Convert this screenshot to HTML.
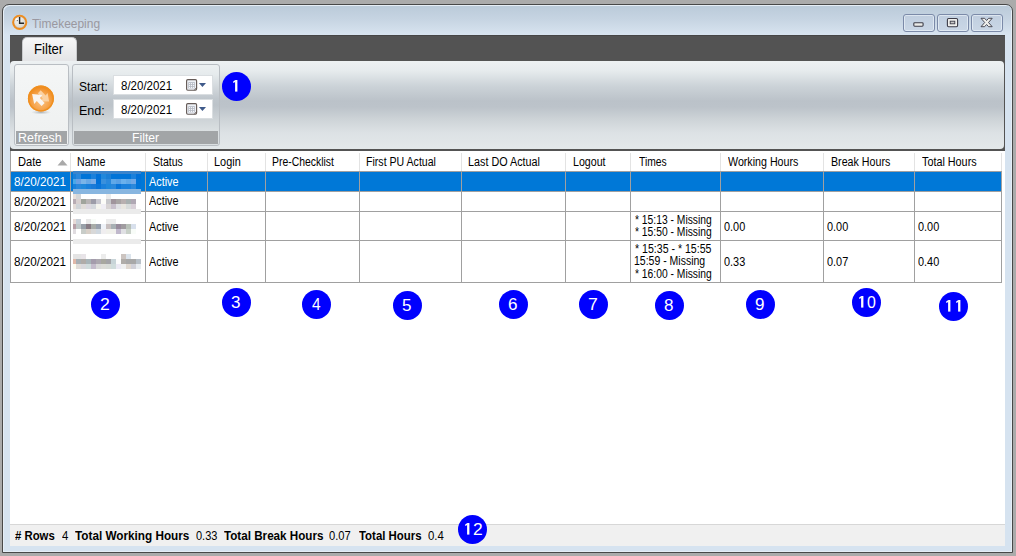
<!DOCTYPE html>
<html><head><meta charset="utf-8">
<style>
*{box-sizing:border-box;margin:0;padding:0}
html,body{width:1016px;height:556px;overflow:hidden;background:#ababab;font-family:"Liberation Sans",sans-serif;position:relative}
.a{position:absolute;white-space:nowrap}
#win{left:2px;top:4px;width:1011px;height:549px;border:1px solid #484848;border-radius:7px 7px 0 0;background:linear-gradient(#bacad9 0px,#c6d4e2 14px,#d8e4f0 30px,#d6e3f0 60px,#d6e3f0 100%);box-shadow:inset 1px 1px 0 #e6eef6,inset -1px -1px 0 #e6eef6;}
#title{left:32px;top:15px;font-size:13px;color:#9a98a0;}
.tb{top:14px;width:32px;height:18px;border:1px solid #7b8aa8;border-radius:3px;background:linear-gradient(#c0cedf,#cad7e6);box-shadow:inset 0 0 0 1px rgba(240,246,252,0.6);}
#band{left:10px;top:35px;width:995px;height:116px;background:#535353;border-top:1px solid #464646;}
#tab{left:22px;top:37px;width:55px;height:25px;border-radius:5px 5px 0 0;background:linear-gradient(#f7f7f7,#e3e4e6);border:1px solid #c9cacc;border-bottom:none;}
#ribbon{left:10px;top:61px;width:994px;height:88px;border-radius:3px;background:linear-gradient(#edf1f2 0px,#e6ebed 10px,#ccd3d8 25px,#bbc2c9 40px,#bcc3ca 46px,#cdd3d7 58px,#dde2e5 72px,#e3e8ea 88px);border-radius:4px;}
.grp{top:64px;height:82px;border:1px solid #b9bec3;border-radius:3px;background:linear-gradient(#ecf0f1 0px,#e6ebed 9px,#d2d8dc 22px,#bfc6cc 34px,#bcc3c9 40px,#cbd1d5 52px,#dbe0e2 66px);}
.glab{position:absolute;left:1px;right:1px;bottom:1px;height:13px;background:#a2a5a7;}
.inp{left:113px;width:100px;height:20px;background:#fff;border:1px solid #dadee1;}
#grid{left:10px;top:151px;width:995px;height:373px;background:#fff;}
.ln{position:absolute;background:#a0a0a0}
.hs{position:absolute;background:#e3e3e3}
.t{position:absolute;white-space:nowrap;color:#111;font-size:11px;line-height:13px}
#status{left:10px;top:524px;width:995px;height:22px;background:#f0f0f0;border-top:1px solid #d7d7d7;}
.circ{position:absolute;width:29.5px;height:29.5px;border-radius:50%;background:#0000fe;}
.ct{position:absolute;color:#fff;font-size:16px;white-space:nowrap}
</style></head><body>
<div id="win" class="a"></div>
<svg class="a" style="left:11px;top:14px" width="18" height="17" viewBox="0 0 18 17">
  <defs><radialGradient id="cg" cx="0.4" cy="0.35" r="0.7"><stop offset="0" stop-color="#f6f6f2"/><stop offset="1" stop-color="#cfd1cb"/></radialGradient></defs>
  <circle cx="8.7" cy="8.3" r="6.7" fill="url(#cg)" stroke="#ef8e1f" stroke-width="1.8"/>
  <circle cx="8.7" cy="8.3" r="5.75" fill="none" stroke="#c8701e" stroke-width="0.5" stroke-opacity="0.7"/>
  <path d="M8.6 3.0 V9.2 H13.0" fill="none" stroke="#262626" stroke-width="1.4"/>
  <rect x="4.6" y="4.5" width="1.8" height="1.8" fill="#fff"/>
  <rect x="5.8" y="6.1" width="1" height="1" fill="#555"/>
</svg>
<div id="title" class="a"></div>
<div class="t" style="left:32.17px;top:23.80px;font-size:13px;color:#9a98a0;font-weight:normal;line-height:0;transform:scaleX(0.9210);transform-origin:0 0;">Timekeeping</div>
<div class="a tb" style="left:903px"></div>
<div class="a tb" style="left:937px"></div>
<div class="a tb" style="left:971px"></div>
<svg class="a" style="left:900px;top:12px" width="110" height="22" viewBox="0 0 110 22">
 <rect x="13.8" y="10.7" width="9.3" height="3.5" rx="0.9" fill="#ebebe8" stroke="#3c3c48" stroke-width="1.1"/>
 <rect x="47.4" y="6.5" width="10.2" height="8.2" rx="1.2" fill="#efefec" stroke="#3c3c48" stroke-width="1.1"/>
 <rect x="50.2" y="9.2" width="4.6" height="2.6" fill="#c8c8c8" stroke="#3c3c48" stroke-width="0.9"/>
 <path d="M81 6.3 L84.6 6.3 L86.6 8.5 L88.6 6.3 L92.2 6.3 L88.5 10.5 L92.2 14.7 L88.6 14.7 L86.6 12.5 L84.6 14.7 L81 14.7 L84.7 10.5 Z" fill="#efefec" stroke="#3c3c48" stroke-width="0.9" stroke-linejoin="round"/>
</svg>
<div id="band" class="a"></div>
<div id="tab" class="a"></div>
<div class="t" style="left:34.06px;top:48.85px;font-size:14px;color:#000;font-weight:normal;line-height:0;transform:scaleX(0.9400);transform-origin:0 0;">Filter</div>
<div id="ribbon" class="a"></div>
<div class="a grp" style="left:14px;width:55px;background:linear-gradient(#f4f6f6,#eef0f0)"><div class="glab"></div></div>
<svg class="a" style="left:24px;top:81px" width="34" height="34" viewBox="0 0 34 34">
 <defs><radialGradient id="og" cx="0.5" cy="0.6" r="0.55"><stop offset="0" stop-color="#fbc487"/><stop offset="0.55" stop-color="#f6a650"/><stop offset="1" stop-color="#ef8a1e"/></radialGradient>
 <radialGradient id="sh" cx="0.5" cy="0.5" r="0.5"><stop offset="0" stop-color="#9aa0a4" stop-opacity="0.8"/><stop offset="1" stop-color="#b8bcc0" stop-opacity="0"/></radialGradient></defs>
 <ellipse cx="17" cy="31.3" rx="10" ry="2.2" fill="url(#sh)"/>
 <circle cx="16.9" cy="17.6" r="13" fill="url(#og)"/>
 <circle cx="16.9" cy="17.6" r="12.3" fill="none" stroke="#f0901f" stroke-width="1.4"/>
 <path d="M25.1 20.4 L16.6 20.3 L18.8 17.8 L13.9 12.3 L16.7 9.3 L21.6 14.6 L23.6 11.9 Z" fill="#fbd2a2"/>
 <path d="M8.1 13.0 L18.4 14.1 L15.9 16.9 L20.6 21.9 L17.6 25.0 L12.8 20.0 L10.2 22.9 Z" fill="#f8f5f2"/>
</svg>
<div class="a grp" style="left:72px;width:148px;"><div class="glab"></div></div>
<div class="t" style="left:18.40px;top:138.27px;font-size:12.5px;color:#fff;font-weight:normal;line-height:0;transform:scaleX(0.9976);transform-origin:0 0;">Refresh</div>
<div class="t" style="left:131.92px;top:138.27px;font-size:12.5px;color:#fff;font-weight:normal;line-height:0;transform:scaleX(0.9774);transform-origin:0 0;">Filter</div>
<div class="t" style="left:78.90px;top:86.54px;font-size:12px;color:#000;font-weight:normal;line-height:0;transform:scaleX(1.0037);transform-origin:0 0;">Start:</div>
<div class="t" style="left:78.65px;top:110.74px;font-size:12px;color:#000;font-weight:normal;line-height:0;transform:scaleX(1.0462);transform-origin:0 0;">End:</div>
<div class="a inp" style="top:75px"></div>
<svg class="a" style="left:184px;top:77px" width="26" height="16" viewBox="0 0 26 16">
 <rect x="2.6" y="2.6" width="10" height="10.6" rx="1.2" fill="#eef1f6" stroke="#655b57" stroke-width="1.15"/><path d="M12.6 10.6 L10.4 13.2" stroke="#655b57" stroke-width="1"/>
 <rect x="4.3" y="5.2" width="6.6" height="6.2" fill="#b4b9c2"/>
 <g fill="#f4f6fa"><rect x="5" y="6" width="1.2" height="1.2"/><rect x="7" y="6" width="1.2" height="1.2"/><rect x="9" y="6" width="1.2" height="1.2"/>
 <rect x="5" y="8" width="1.2" height="1.2"/><rect x="7" y="8" width="1.2" height="1.2"/><rect x="9" y="8" width="1.2" height="1.2"/>
 <rect x="5" y="10" width="1.2" height="1.2"/><rect x="7" y="10" width="1.2" height="1.2"/><rect x="9" y="10" width="1.2" height="1.2"/></g>
 <path d="M14.9 6 L22 6 L18.45 10 Z" fill="#3f5a8a"/>
</svg>
<div class="a inp" style="top:99px"></div>
<svg class="a" style="left:184px;top:101px" width="26" height="16" viewBox="0 0 26 16">
 <rect x="2.6" y="2.6" width="10" height="10.6" rx="1.2" fill="#eef1f6" stroke="#655b57" stroke-width="1.15"/><path d="M12.6 10.6 L10.4 13.2" stroke="#655b57" stroke-width="1"/>
 <rect x="4.3" y="5.2" width="6.6" height="6.2" fill="#b4b9c2"/>
 <g fill="#f4f6fa"><rect x="5" y="6" width="1.2" height="1.2"/><rect x="7" y="6" width="1.2" height="1.2"/><rect x="9" y="6" width="1.2" height="1.2"/>
 <rect x="5" y="8" width="1.2" height="1.2"/><rect x="7" y="8" width="1.2" height="1.2"/><rect x="9" y="8" width="1.2" height="1.2"/>
 <rect x="5" y="10" width="1.2" height="1.2"/><rect x="7" y="10" width="1.2" height="1.2"/><rect x="9" y="10" width="1.2" height="1.2"/></g>
 <path d="M14.9 6 L22 6 L18.45 10 Z" fill="#3f5a8a"/>
</svg>
<div class="t" style="left:120.86px;top:85.80px;font-size:13px;color:#000;font-weight:normal;line-height:0;transform:scaleX(0.8846);transform-origin:0 0;">8/20/2021</div>
<div class="t" style="left:120.86px;top:109.70px;font-size:13px;color:#000;font-weight:normal;line-height:0;transform:scaleX(0.8846);transform-origin:0 0;">8/20/2021</div>
<div id="grid" class="a"></div>
<div class="a" style="left:11px;top:172px;width:990px;height:19px;background:#0078d7"></div>
<div class="ln" style="left:10px;top:151px;width:1px;height:132px"></div>
<div class="hs" style="left:70px;top:153px;width:1px;height:18px"></div>
<div class="ln" style="left:70px;top:171px;width:1px;height:112px"></div>
<div class="hs" style="left:145px;top:153px;width:1px;height:18px"></div>
<div class="ln" style="left:145px;top:171px;width:1px;height:112px"></div>
<div class="hs" style="left:207px;top:153px;width:1px;height:18px"></div>
<div class="ln" style="left:207px;top:171px;width:1px;height:112px"></div>
<div class="hs" style="left:265px;top:153px;width:1px;height:18px"></div>
<div class="ln" style="left:265px;top:171px;width:1px;height:112px"></div>
<div class="hs" style="left:359px;top:153px;width:1px;height:18px"></div>
<div class="ln" style="left:359px;top:171px;width:1px;height:112px"></div>
<div class="hs" style="left:461px;top:153px;width:1px;height:18px"></div>
<div class="ln" style="left:461px;top:171px;width:1px;height:112px"></div>
<div class="hs" style="left:565px;top:153px;width:1px;height:18px"></div>
<div class="ln" style="left:565px;top:171px;width:1px;height:112px"></div>
<div class="hs" style="left:630px;top:153px;width:1px;height:18px"></div>
<div class="ln" style="left:630px;top:171px;width:1px;height:112px"></div>
<div class="hs" style="left:720px;top:153px;width:1px;height:18px"></div>
<div class="ln" style="left:720px;top:171px;width:1px;height:112px"></div>
<div class="hs" style="left:823px;top:153px;width:1px;height:18px"></div>
<div class="ln" style="left:823px;top:171px;width:1px;height:112px"></div>
<div class="hs" style="left:914px;top:153px;width:1px;height:18px"></div>
<div class="ln" style="left:914px;top:171px;width:1px;height:112px"></div>
<div class="hs" style="left:1001px;top:153px;width:1px;height:18px"></div>
<div class="ln" style="left:1001px;top:171px;width:1px;height:112px"></div>
<div class="ln" style="left:10px;top:171px;width:992px;height:1px"></div>
<div class="ln" style="left:10px;top:191px;width:992px;height:1px"></div>
<div class="ln" style="left:10px;top:211px;width:992px;height:1px"></div>
<div class="ln" style="left:10px;top:240px;width:992px;height:1px"></div>
<div class="ln" style="left:10px;top:282px;width:992px;height:1px"></div>
<svg class="a" style="left:73px;top:171px" width="68" height="100" shape-rendering="crispEdges"><rect x="0" y="0" width="68" height="3" fill="#3a84cc"/><rect x="0" y="3" width="3" height="5" fill="#1a7fd8"/><rect x="3" y="3" width="5" height="5" fill="#2a88dc"/><rect x="8" y="3" width="5" height="5" fill="#0074d8"/><rect x="13" y="3" width="5" height="5" fill="#0074d8"/><rect x="18" y="3" width="5" height="5" fill="#1a80dc"/><rect x="23" y="3" width="5" height="5" fill="#0070d8"/><rect x="28" y="3" width="5" height="5" fill="#2088dc"/><rect x="33" y="3" width="5" height="5" fill="#1a7fd6"/><rect x="38" y="3" width="5" height="5" fill="#0074d8"/><rect x="43" y="3" width="5" height="5" fill="#0074d8"/><rect x="48" y="3" width="5" height="5" fill="#0074d8"/><rect x="53" y="3" width="5" height="5" fill="#0074d8"/><rect x="58" y="3" width="5" height="5" fill="#1a80dc"/><rect x="63" y="3" width="5" height="5" fill="#0070d8"/><rect x="0" y="8" width="3" height="5" fill="#4aa8e8"/><rect x="3" y="8" width="5" height="5" fill="#6aa0e4"/><rect x="8" y="8" width="5" height="5" fill="#7ab4e8"/><rect x="13" y="8" width="5" height="5" fill="#68a8e6"/><rect x="18" y="8" width="5" height="5" fill="#7aace6"/><rect x="23" y="8" width="5" height="5" fill="#0070d8"/><rect x="28" y="8" width="5" height="5" fill="#3a90dc"/><rect x="33" y="8" width="5" height="5" fill="#2a88dc"/><rect x="38" y="8" width="5" height="5" fill="#60a8e8"/><rect x="43" y="8" width="5" height="5" fill="#5aa0e4"/><rect x="48" y="8" width="5" height="5" fill="#6ab0ec"/><rect x="53" y="8" width="5" height="5" fill="#60a8e8"/><rect x="58" y="8" width="5" height="5" fill="#70a8e6"/><rect x="63" y="8" width="5" height="5" fill="#0074d8"/><rect x="0" y="13" width="3" height="5" fill="#1a80dc"/><rect x="3" y="13" width="5" height="5" fill="#2a88dc"/><rect x="8" y="13" width="5" height="5" fill="#2088dc"/><rect x="13" y="13" width="5" height="5" fill="#1a80dc"/><rect x="18" y="13" width="5" height="5" fill="#1a7ad8"/><rect x="23" y="13" width="5" height="5" fill="#0a74d8"/><rect x="28" y="13" width="5" height="5" fill="#1a80dc"/><rect x="33" y="13" width="5" height="5" fill="#2088dc"/><rect x="38" y="13" width="5" height="5" fill="#2a88dc"/><rect x="43" y="13" width="5" height="5" fill="#0a74d8"/><rect x="48" y="13" width="5" height="5" fill="#1a80dc"/><rect x="53" y="13" width="5" height="5" fill="#1a80dc"/><rect x="58" y="13" width="5" height="5" fill="#2a88dc"/><rect x="63" y="13" width="5" height="5" fill="#0074d8"/><rect x="0" y="18" width="68" height="5" fill="#88b6e0"/><rect x="0" y="23" width="3" height="5" fill="#e8e0dc"/><rect x="3" y="23" width="5" height="5" fill="#d4d6d8"/><rect x="33" y="23" width="5" height="5" fill="#ececec"/><rect x="0" y="28" width="3" height="5" fill="#b8acb4"/><rect x="3" y="28" width="5" height="5" fill="#d8d0d0"/><rect x="8" y="28" width="5" height="5" fill="#a0a49c"/><rect x="13" y="28" width="5" height="5" fill="#b8b4b4"/><rect x="18" y="28" width="5" height="5" fill="#9c9ca8"/><rect x="23" y="28" width="5" height="5" fill="#c8c8d0"/><rect x="28" y="28" width="5" height="5" fill="#fcfcf8"/><rect x="33" y="28" width="5" height="5" fill="#c8c8cc"/><rect x="38" y="28" width="5" height="5" fill="#a0949c"/><rect x="43" y="28" width="5" height="5" fill="#a8a4a4"/><rect x="48" y="28" width="5" height="5" fill="#b8b0b0"/><rect x="53" y="28" width="5" height="5" fill="#a8b0b0"/><rect x="58" y="28" width="5" height="5" fill="#b0a8b4"/><rect x="0" y="33" width="3" height="5" fill="#e4dcd8"/><rect x="3" y="33" width="5" height="5" fill="#d0d4d8"/><rect x="8" y="33" width="5" height="5" fill="#e0dcd8"/><rect x="13" y="33" width="5" height="5" fill="#dcd8e0"/><rect x="18" y="33" width="5" height="5" fill="#d4d8dc"/><rect x="23" y="33" width="5" height="5" fill="#f4f4ee"/><rect x="28" y="33" width="5" height="5" fill="#f0eef4"/><rect x="33" y="33" width="5" height="5" fill="#d8d4d4"/><rect x="38" y="33" width="5" height="5" fill="#c8c0cc"/><rect x="43" y="33" width="5" height="5" fill="#e0e0e4"/><rect x="48" y="33" width="5" height="5" fill="#e8e6e0"/><rect x="53" y="33" width="5" height="5" fill="#d8dcdc"/><rect x="58" y="33" width="5" height="5" fill="#d8d0d8"/><rect x="0" y="38" width="68" height="5" fill="#ebebeb"/><rect x="0" y="48" width="3" height="5" fill="#e8dcd8"/><rect x="3" y="48" width="5" height="5" fill="#c8d0d8"/><rect x="13" y="48" width="5" height="5" fill="#e8e8e8"/><rect x="18" y="48" width="5" height="5" fill="#f8fcf8"/><rect x="33" y="48" width="5" height="5" fill="#ececec"/><rect x="38" y="48" width="5" height="5" fill="#ececec"/><rect x="0" y="53" width="3" height="5" fill="#b8a0a8"/><rect x="3" y="53" width="5" height="5" fill="#c0c8c8"/><rect x="8" y="53" width="5" height="5" fill="#98a0a8"/><rect x="13" y="53" width="5" height="5" fill="#887c84"/><rect x="18" y="53" width="5" height="5" fill="#a8aca8"/><rect x="23" y="53" width="5" height="5" fill="#98a0ac"/><rect x="28" y="53" width="5" height="5" fill="#eef2f8"/><rect x="33" y="53" width="5" height="5" fill="#c8c0c0"/><rect x="38" y="53" width="5" height="5" fill="#a8b0b4"/><rect x="43" y="53" width="5" height="5" fill="#988c9c"/><rect x="48" y="53" width="5" height="5" fill="#a09ca0"/><rect x="53" y="53" width="5" height="5" fill="#b8c0b8"/><rect x="58" y="53" width="5" height="5" fill="#d8e0ec"/><rect x="0" y="58" width="3" height="5" fill="#e0dce0"/><rect x="8" y="58" width="5" height="5" fill="#c8ccc8"/><rect x="13" y="58" width="5" height="5" fill="#d8d0c8"/><rect x="18" y="58" width="5" height="5" fill="#d8d8d8"/><rect x="23" y="58" width="5" height="5" fill="#d0d8e0"/><rect x="28" y="58" width="5" height="5" fill="#f0eef0"/><rect x="33" y="58" width="5" height="5" fill="#f0f0ec"/><rect x="38" y="58" width="5" height="5" fill="#f0f0ec"/><rect x="43" y="58" width="5" height="5" fill="#c0b8cc"/><rect x="48" y="58" width="5" height="5" fill="#e0e0e4"/><rect x="53" y="58" width="5" height="5" fill="#c8d0c8"/><rect x="58" y="58" width="5" height="5" fill="#f8fcf8"/><rect x="0" y="68" width="68" height="5" fill="#ebebeb"/><rect x="0" y="83" width="3" height="5" fill="#e4e4e4"/><rect x="3" y="83" width="5" height="5" fill="#e4e4e4"/><rect x="8" y="83" width="5" height="5" fill="#e8e4e8"/><rect x="28" y="83" width="5" height="5" fill="#ececec"/><rect x="48" y="83" width="5" height="5" fill="#ccc4c0"/><rect x="53" y="83" width="5" height="5" fill="#dce4ec"/><rect x="0" y="88" width="3" height="5" fill="#e0b8a8"/><rect x="3" y="88" width="5" height="5" fill="#a8b0b4"/><rect x="8" y="88" width="5" height="5" fill="#b0aca8"/><rect x="13" y="88" width="5" height="5" fill="#a8b4b8"/><rect x="18" y="88" width="5" height="5" fill="#a49cac"/><rect x="23" y="88" width="5" height="5" fill="#aca8b0"/><rect x="28" y="88" width="5" height="5" fill="#a8a8a0"/><rect x="33" y="88" width="5" height="5" fill="#a4a4a8"/><rect x="38" y="88" width="5" height="5" fill="#c8d4d8"/><rect x="43" y="88" width="5" height="5" fill="#fcfcfc"/><rect x="48" y="88" width="5" height="5" fill="#b0aca8"/><rect x="53" y="88" width="5" height="5" fill="#a8a8a8"/><rect x="58" y="88" width="5" height="5" fill="#a8a8a8"/><rect x="63" y="88" width="5" height="5" fill="#b8c0c8"/><rect x="0" y="93" width="3" height="5" fill="#fcfcf0"/><rect x="3" y="93" width="5" height="5" fill="#e0dcd8"/><rect x="8" y="93" width="5" height="5" fill="#d8d8dc"/><rect x="13" y="93" width="5" height="5" fill="#d0dcdc"/><rect x="18" y="93" width="5" height="5" fill="#c4bccc"/><rect x="23" y="93" width="5" height="5" fill="#d8d8d8"/><rect x="28" y="93" width="5" height="5" fill="#dcdcd8"/><rect x="33" y="93" width="5" height="5" fill="#d8dcd8"/><rect x="38" y="93" width="5" height="5" fill="#d0dcdc"/><rect x="43" y="93" width="5" height="5" fill="#eceaf4"/><rect x="48" y="93" width="5" height="5" fill="#f0f0f0"/><rect x="53" y="93" width="5" height="5" fill="#e0d8d0"/><rect x="58" y="93" width="5" height="5" fill="#d0d0d8"/><rect x="63" y="93" width="5" height="5" fill="#e8ecf0"/></svg>
<div class="t" style="left:18.27px;top:161.64px;font-size:12px;color:#000;font-weight:normal;line-height:0;transform:scaleX(0.9263);transform-origin:0 0;">Date</div>
<div class="t" style="left:77.41px;top:161.64px;font-size:12px;color:#000;font-weight:normal;line-height:0;transform:scaleX(0.8852);transform-origin:0 0;">Name</div>
<div class="t" style="left:152.76px;top:161.64px;font-size:12px;color:#000;font-weight:normal;line-height:0;transform:scaleX(0.8788);transform-origin:0 0;">Status</div>
<div class="t" style="left:214.49px;top:161.64px;font-size:12px;color:#000;font-weight:normal;line-height:0;transform:scaleX(0.9091);transform-origin:0 0;">Login</div>
<div class="t" style="left:272.13px;top:161.64px;font-size:12px;color:#000;font-weight:normal;line-height:0;transform:scaleX(0.8683);transform-origin:0 0;">Pre-Checklist</div>
<div class="t" style="left:366.42px;top:161.64px;font-size:12px;color:#000;font-weight:normal;line-height:0;transform:scaleX(0.8818);transform-origin:0 0;">First PU Actual</div>
<div class="t" style="left:468.40px;top:161.64px;font-size:12px;color:#000;font-weight:normal;line-height:0;transform:scaleX(0.8987);transform-origin:0 0;">Last DO Actual</div>
<div class="t" style="left:572.61px;top:161.64px;font-size:12px;color:#000;font-weight:normal;line-height:0;transform:scaleX(0.8867);transform-origin:0 0;">Logout</div>
<div class="t" style="left:638.59px;top:161.64px;font-size:12px;color:#000;font-weight:normal;line-height:0;transform:scaleX(0.8571);transform-origin:0 0;">Times</div>
<div class="t" style="left:728.30px;top:161.64px;font-size:12px;color:#000;font-weight:normal;line-height:0;transform:scaleX(0.8889);transform-origin:0 0;">Working Hours</div>
<div class="t" style="left:830.51px;top:161.64px;font-size:12px;color:#000;font-weight:normal;line-height:0;transform:scaleX(0.8889);transform-origin:0 0;">Break Hours</div>
<div class="t" style="left:922.17px;top:161.64px;font-size:12px;color:#000;font-weight:normal;line-height:0;transform:scaleX(0.9000);transform-origin:0 0;">Total Hours</div>
<svg class="a" style="left:57px;top:159px" width="11" height="7"><path d="M0.5 6.5 L5.5 0.8 L10.5 6.5Z" fill="#a9a9a9"/></svg>
<div class="t" style="left:13.73px;top:181.57px;font-size:12.5px;color:#fff;font-weight:normal;line-height:0;transform:scaleX(0.9358);transform-origin:0 0;">8/20/2021</div>
<div class="t" style="left:148.90px;top:181.74px;font-size:12px;color:#fff;font-weight:normal;line-height:0;transform:scaleX(0.9054);transform-origin:0 0;">Active</div>
<div class="t" style="left:13.73px;top:201.77px;font-size:12.5px;color:#000;font-weight:normal;line-height:0;transform:scaleX(0.9358);transform-origin:0 0;">8/20/2021</div>
<div class="t" style="left:148.90px;top:201.34px;font-size:12px;color:#000;font-weight:normal;line-height:0;transform:scaleX(0.9054);transform-origin:0 0;">Active</div>
<div class="t" style="left:13.73px;top:227.27px;font-size:12.5px;color:#000;font-weight:normal;line-height:0;transform:scaleX(0.9358);transform-origin:0 0;">8/20/2021</div>
<div class="t" style="left:148.90px;top:226.84px;font-size:12px;color:#000;font-weight:normal;line-height:0;transform:scaleX(0.9054);transform-origin:0 0;">Active</div>
<div class="t" style="left:13.73px;top:262.07px;font-size:12.5px;color:#000;font-weight:normal;line-height:0;transform:scaleX(0.9358);transform-origin:0 0;">8/20/2021</div>
<div class="t" style="left:148.90px;top:261.64px;font-size:12px;color:#000;font-weight:normal;line-height:0;transform:scaleX(0.9054);transform-origin:0 0;">Active</div>
<div class="t" style="left:634.59px;top:219.84px;font-size:12px;color:#000;font-weight:normal;line-height:0;transform:scaleX(0.8589);transform-origin:0 0;">* 15:13 - Missing</div>
<div class="t" style="left:634.59px;top:232.44px;font-size:12px;color:#000;font-weight:normal;line-height:0;transform:scaleX(0.8589);transform-origin:0 0;">* 15:50 - Missing</div>
<div class="t" style="left:634.58px;top:248.74px;font-size:12px;color:#000;font-weight:normal;line-height:0;transform:scaleX(0.8814);transform-origin:0 0;">* 15:35 - * 15:55</div>
<div class="t" style="left:633.93px;top:261.34px;font-size:12px;color:#000;font-weight:normal;line-height:0;transform:scaleX(0.8742);transform-origin:0 0;">15:59 - Missing</div>
<div class="t" style="left:634.59px;top:273.84px;font-size:12px;color:#000;font-weight:normal;line-height:0;transform:scaleX(0.8589);transform-origin:0 0;">* 16:00 - Missing</div>
<div class="t" style="left:724.06px;top:227.07px;font-size:12.5px;color:#000;font-weight:normal;line-height:0;transform:scaleX(0.8731);transform-origin:0 0;">0.00</div>
<div class="t" style="left:827.06px;top:227.07px;font-size:12.5px;color:#000;font-weight:normal;line-height:0;transform:scaleX(0.8731);transform-origin:0 0;">0.00</div>
<div class="t" style="left:918.06px;top:227.07px;font-size:12.5px;color:#000;font-weight:normal;line-height:0;transform:scaleX(0.8731);transform-origin:0 0;">0.00</div>
<div class="t" style="left:724.06px;top:262.07px;font-size:12.5px;color:#000;font-weight:normal;line-height:0;transform:scaleX(0.8731);transform-origin:0 0;">0.33</div>
<div class="t" style="left:827.06px;top:262.07px;font-size:12.5px;color:#000;font-weight:normal;line-height:0;transform:scaleX(0.8731);transform-origin:0 0;">0.07</div>
<div class="t" style="left:918.06px;top:262.07px;font-size:12.5px;color:#000;font-weight:normal;line-height:0;transform:scaleX(0.8731);transform-origin:0 0;">0.40</div>
<div id="status" class="a"></div>
<div class="t" style="left:15.06px;top:536.44px;font-size:12px;color:#000;font-weight:bold;line-height:0;transform:scaleX(0.9455);transform-origin:0 0;"># Rows</div>
<div class="t" style="left:61.76px;top:536.44px;font-size:12px;color:#000;font-weight:normal;line-height:0;transform:scaleX(0.9500);transform-origin:0 0;">4</div>
<div class="t" style="left:75.00px;top:536.44px;font-size:12px;color:#000;font-weight:bold;line-height:0;transform:scaleX(0.9785);transform-origin:0 0;">Total Working Hours</div>
<div class="t" style="left:195.64px;top:536.44px;font-size:12px;color:#000;font-weight:normal;line-height:0;transform:scaleX(0.9169);transform-origin:0 0;">0.33</div>
<div class="t" style="left:224.20px;top:536.44px;font-size:12px;color:#000;font-weight:bold;line-height:0;transform:scaleX(0.9706);transform-origin:0 0;">Total Break Hours</div>
<div class="t" style="left:329.43px;top:536.44px;font-size:12px;color:#000;font-weight:normal;line-height:0;transform:scaleX(0.9303);transform-origin:0 0;">0.07</div>
<div class="t" style="left:358.50px;top:536.44px;font-size:12px;color:#000;font-weight:bold;line-height:0;transform:scaleX(0.9502);transform-origin:0 0;">Total Hours</div>
<div class="t" style="left:427.52px;top:536.44px;font-size:12px;color:#000;font-weight:normal;line-height:0;transform:scaleX(0.9524);transform-origin:0 0;">0.4</div>
<div class="circ" style="left:221.85px;top:71.75px"></div>
<svg class="a" style="left:232.90px;top:80.00px" width="5" height="12" viewBox="0 0 5 12"><rect x="2.1" y="0" width="2.3" height="11.6" fill="#fff"/><path d="M2.3 0 L0.2 1.5 L0.2 2.9 L2.3 2.1 Z" fill="#fff"/></svg>
<div class="circ" style="left:90.95px;top:289.65px"></div>
<div class="t" style="left:100.27px;top:304.96px;font-size:16px;color:#fff;font-weight:normal;line-height:0;transform:scaleX(1.1034);transform-origin:0 0;">2</div>
<div class="circ" style="left:221.65px;top:287.85px"></div>
<div class="t" style="left:231.00px;top:303.16px;font-size:16px;color:#fff;font-weight:normal;line-height:0;transform:scaleX(1.0667);transform-origin:0 0;">3</div>
<div class="circ" style="left:301.75px;top:289.65px"></div>
<div class="t" style="left:311.66px;top:304.96px;font-size:16px;color:#fff;font-weight:normal;line-height:0;transform:scaleX(0.9697);transform-origin:0 0;">4</div>
<div class="circ" style="left:392.95px;top:290.75px"></div>
<div class="t" style="left:402.30px;top:306.06px;font-size:16px;color:#fff;font-weight:normal;line-height:0;transform:scaleX(1.0667);transform-origin:0 0;">5</div>
<div class="circ" style="left:498.75px;top:289.65px"></div>
<div class="t" style="left:508.10px;top:304.96px;font-size:16px;color:#fff;font-weight:normal;line-height:0;transform:scaleX(1.0667);transform-origin:0 0;">6</div>
<div class="circ" style="left:578.95px;top:289.75px"></div>
<div class="t" style="left:588.27px;top:305.06px;font-size:16px;color:#fff;font-weight:normal;line-height:0;transform:scaleX(1.1034);transform-origin:0 0;">7</div>
<div class="circ" style="left:654.95px;top:290.75px"></div>
<div class="t" style="left:664.30px;top:306.06px;font-size:16px;color:#fff;font-weight:normal;line-height:0;transform:scaleX(1.0667);transform-origin:0 0;">8</div>
<div class="circ" style="left:745.75px;top:289.75px"></div>
<div class="t" style="left:755.10px;top:305.06px;font-size:16px;color:#fff;font-weight:normal;line-height:0;transform:scaleX(1.0667);transform-origin:0 0;">9</div>
<div class="circ" style="left:851.85px;top:287.85px"></div>
<svg class="a" style="left:858.90px;top:296.10px" width="5" height="12" viewBox="0 0 5 12"><rect x="2.1" y="0" width="2.3" height="11.6" fill="#fff"/><path d="M2.3 0 L0.2 1.5 L0.2 2.9 L2.3 2.1 Z" fill="#fff"/></svg>
<div class="t" style="left:866.60px;top:303.16px;font-size:16px;color:#fff;font-weight:normal;line-height:0;transform:scaleX(0.9935);transform-origin:0 0;">0</div>
<div class="circ" style="left:938.65px;top:291.65px"></div>
<svg class="a" style="left:945.90px;top:299.90px" width="5" height="12" viewBox="0 0 5 12"><rect x="2.1" y="0" width="2.3" height="11.6" fill="#fff"/><path d="M2.3 0 L0.2 1.5 L0.2 2.9 L2.3 2.1 Z" fill="#fff"/></svg>
<svg class="a" style="left:956.00px;top:299.90px" width="5" height="12" viewBox="0 0 5 12"><rect x="2.1" y="0" width="2.3" height="11.6" fill="#fff"/><path d="M2.3 0 L0.2 1.5 L0.2 2.9 L2.3 2.1 Z" fill="#fff"/></svg>
<div class="circ" style="left:457.75px;top:514.75px"></div>
<svg class="a" style="left:465.20px;top:523.00px" width="5" height="12" viewBox="0 0 5 12"><rect x="2.1" y="0" width="2.3" height="11.6" fill="#fff"/><path d="M2.3 0 L0.2 1.5 L0.2 2.9 L2.3 2.1 Z" fill="#fff"/></svg>
<div class="t" style="left:472.98px;top:530.06px;font-size:16px;color:#fff;font-weight:normal;line-height:0;transform:scaleX(1.0897);transform-origin:0 0;">2</div>
</body></html>
